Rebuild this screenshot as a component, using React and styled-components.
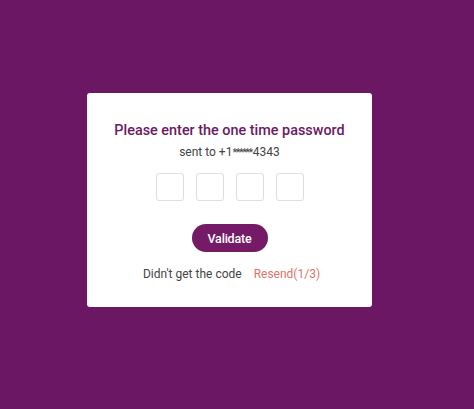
import React from 'react'
import styled, { createGlobalStyle } from 'styled-components'

const GlobalStyle = createGlobalStyle`
  html, body {
    margin: 0;
    padding: 0;
    background: #6c1763;
  }
  body {
    font-family: Roboto, Lato, sans-serif;
  }
`

const Page = styled.div`
  width: 474px;
  height: 409px;
  box-sizing: border-box;
  padding: 93px 0 0 87px;
  background: #6c1763;
`

const Card = styled.div`
  width: 285px;
  height: 214px;
  box-sizing: border-box;
  padding-top: 28px;
  background: #fff;
  border-radius: 3px;
  display: flex;
  flex-direction: column;
  align-items: center;
`

const Title = styled.h2`
  margin: 0;
  font-size: 14.4px;
  line-height: 20px;
  font-weight: 500;
  color: #6b1a62;
`

const Sub = styled.p`
  margin: 3px 0 0;
  font-size: 12px;
  line-height: 16px;
  color: #444;
`

const Mask = styled.span`
  font-size: 11px;
  letter-spacing: -1.5px;
  margin-right: 1px;
`

const Boxes = styled.div`
  display: flex;
  gap: 12px;
  margin-top: 12px;
`

const Box = styled.input`
  width: 28px;
  height: 28px;
  box-sizing: border-box;
  border: 1px solid #dedede;
  border-radius: 3px;
  outline: none;
  padding: 0;
  text-align: center;
`

const Button = styled.button`
  margin-top: 23px;
  width: 76px;
  height: 28px;
  border: none;
  border-radius: 14px;
  background: #741a67;
  color: #fff;
  font-family: inherit;
  font-size: 12.5px;
  font-weight: 500;
  letter-spacing: -0.2px;
  cursor: pointer;
`

const Footer = styled.div`
  margin-top: 14px;
  display: flex;
  gap: 12px;
  font-size: 12px;
  line-height: 16px;
  padding-left: 4px;
`

const Plain = styled.span`
  color: #444;
`

const Link = styled.span`
  color: ${p => p.color || '#e0736b'};
  cursor: pointer;
`

const App = () => {
  return (
    <>
      <GlobalStyle />
      <Page>
        <Card>
          <Title>Please enter the one time password</Title>
          <Sub>sent to +1<Mask>******</Mask>4343</Sub>
          <Boxes>
            {[0, 1, 2, 3].map(i => <Box key={i} maxLength={1} />)}
          </Boxes>
          <Button type='button'>Validate</Button>
          <Footer>
            <Plain>Didn't get the code</Plain>
            <Link>Resend(1/3)</Link>
          </Footer>
        </Card>
      </Page>
    </>
  )
}

export default App
